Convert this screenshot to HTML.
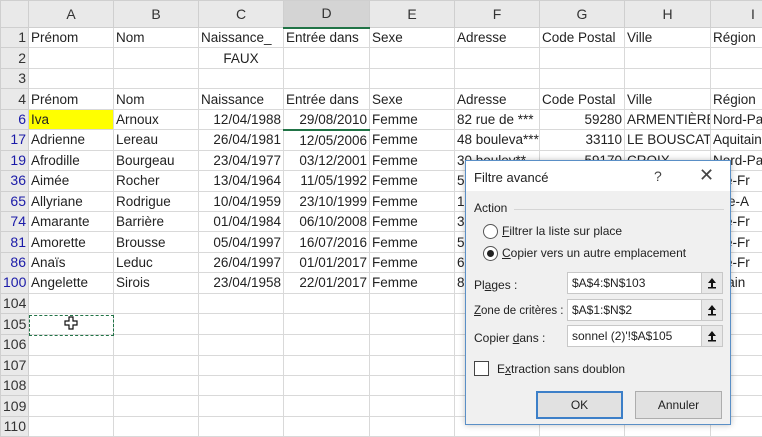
<!DOCTYPE html>
<html><head><meta charset="utf-8"><style>
body{margin:0;width:762px;height:433px;overflow:hidden;background:#fff;font-family:"Liberation Sans",sans-serif;position:relative}
table{border-collapse:collapse;table-layout:fixed;position:absolute;left:0;top:0;width:770px}
td{height:20.45px;border:1px solid #d9d9d9;padding:0 2px;font-size:13.5px;color:#222;white-space:nowrap;overflow:hidden;line-height:17px;box-sizing:border-box}
tr.h td{height:27px;background:#e9e9e9;text-align:center;color:#333;border-color:#cfcfcf;font-size:14px}
td.r{background:#e9e9e9;text-align:right;color:#333;border-color:#cfcfcf;padding:0 2px;font-size:14px}
td.b{color:#1a1aa8}
td.n{text-align:right}
.dlg{position:absolute;left:465px;top:160px;width:264px;height:263px;border:1px solid #5a8fc6;background:#f0f0f0;font-size:12px;color:#222;box-shadow:0 0 6px rgba(0,0,0,.25)}
.dlg div{position:absolute}
.inp{background:#fff;border:1px solid #c8c8c8;height:20px;line-height:20px;padding-left:4px;width:129px}
.ib{width:20px;height:20px;border:1px solid #c8c8c8;background:#e8e8e8}
.btn{width:85px;height:26px;border:1px solid #adadad;background:#e1e1e1;text-align:center;line-height:26px}
.rad{width:13px;height:13px;border:1px solid #555;border-radius:50%;background:#fff}
</style></head><body>
<table>
<colgroup><col style="width:28px"><col style="width:85px"><col style="width:85px"><col style="width:85px"><col style="width:86px"><col style="width:85px"><col style="width:85px"><col style="width:85px"><col style="width:86px"><col style="width:60px"></colgroup>
<tr class="h"><td style="background:#e9e9e9"></td><td>A</td><td>B</td><td>C</td><td style="background:#d4d4d4;border-bottom:2px solid #217346">D</td><td>E</td><td>F</td><td>G</td><td>H</td><td style="text-align:left;padding-left:40px">I</td></tr>
<tr><td class="r">1</td><td>Prénom</td><td>Nom</td><td>Naissance_</td><td>Entrée dans</td><td>Sexe</td><td>Adresse</td><td>Code Postal</td><td>Ville</td><td>Région</td></tr>
<tr><td class="r">2</td><td></td><td></td><td style="text-align:center">FAUX</td><td></td><td></td><td></td><td></td><td></td><td></td></tr>
<tr><td class="r">3</td><td></td><td></td><td></td><td></td><td></td><td></td><td></td><td></td><td></td></tr>
<tr><td class="r">4</td><td>Prénom</td><td>Nom</td><td>Naissance</td><td>Entrée dans</td><td>Sexe</td><td>Adresse</td><td>Code Postal</td><td>Ville</td><td>Région</td></tr>
<tr><td class="r b">6</td><td style="background:#ffff00">Iva</td><td>Arnoux</td><td class="n">12/04/1988</td><td class="n" style="border-bottom:2px solid #217346">29/08/2010</td><td>Femme</td><td>82 rue de ***</td><td class="n">59280</td><td>ARMENTIÈRES</td><td>Nord-Pa</td></tr>
<tr><td class="r b">17</td><td>Adrienne</td><td>Lereau</td><td class="n">26/04/1981</td><td class="n">12/05/2006</td><td>Femme</td><td>48 bouleva***</td><td class="n">33110</td><td>LE BOUSCAT</td><td>Aquitain</td></tr>
<tr><td class="r b">19</td><td>Afrodille</td><td>Bourgeau</td><td class="n">23/04/1977</td><td class="n">03/12/2001</td><td>Femme</td><td>30 boulev**</td><td class="n">59170</td><td>CROIX</td><td>Nord-Pa</td></tr>
<tr><td class="r b">36</td><td>Aimée</td><td>Rocher</td><td class="n">13/04/1964</td><td class="n">11/05/1992</td><td>Femme</td><td>5</td><td></td><td></td><td>-de-Fr</td></tr>
<tr><td class="r b">65</td><td>Allyriane</td><td>Rodrigue</td><td class="n">10/04/1959</td><td class="n">23/10/1999</td><td>Femme</td><td>1</td><td></td><td></td><td>ône-A</td></tr>
<tr><td class="r b">74</td><td>Amarante</td><td>Barrière</td><td class="n">01/04/1984</td><td class="n">06/10/2008</td><td>Femme</td><td>3</td><td></td><td></td><td>-de-Fr</td></tr>
<tr><td class="r b">81</td><td>Amorette</td><td>Brousse</td><td class="n">05/04/1997</td><td class="n">16/07/2016</td><td>Femme</td><td>5</td><td></td><td></td><td>-de-Fr</td></tr>
<tr><td class="r b">86</td><td>Anaïs</td><td>Leduc</td><td class="n">26/04/1997</td><td class="n">01/01/2017</td><td>Femme</td><td>6</td><td></td><td></td><td>-de-Fr</td></tr>
<tr><td class="r b">100</td><td>Angelette</td><td>Sirois</td><td class="n">23/04/1958</td><td class="n">22/01/2017</td><td>Femme</td><td>8</td><td></td><td></td><td>uitain</td></tr>
<tr><td class="r">104</td><td></td><td></td><td></td><td></td><td></td><td></td><td></td><td></td><td></td></tr>
<tr><td class="r">105</td><td style="text-align:center;padding-top:2px"><svg width="14" height="14" viewBox="0 0 14 14"><path d="M5 1h4v4h4v4h-4v4H5V9H1V5h4z" fill="#fff" stroke="#111" stroke-width="1.2"/></svg></td><td></td><td></td><td></td><td></td><td></td><td></td><td></td><td></td></tr>
<tr><td class="r">106</td><td></td><td></td><td></td><td></td><td></td><td></td><td></td><td></td><td></td></tr>
<tr><td class="r">107</td><td></td><td></td><td></td><td></td><td></td><td></td><td></td><td></td><td></td></tr>
<tr><td class="r">108</td><td></td><td></td><td></td><td></td><td></td><td></td><td></td><td></td><td></td></tr>
<tr><td class="r">109</td><td></td><td></td><td></td><td></td><td></td><td></td><td></td><td></td><td></td></tr>
<tr><td class="r">110</td><td></td><td></td><td></td><td></td><td></td><td></td><td></td><td></td><td></td></tr>
</table>
<div style="position:absolute;left:29px;top:315px;width:83px;height:19px;border:1px dashed #217346"></div>
<div class="dlg">
<div style="left:0;top:0;width:264px;height:30px;background:#fff"></div>
<div style="left:8px;top:9px;font-size:13px">Filtre avancé</div>
<div style="left:188px;top:7px;font-size:14px;color:#444">?</div>
<div style="left:233px;top:4px;font-size:18px;color:#444">✕</div>
<div style="left:8px;top:40px">Action</div>
<div style="left:48px;top:48px;width:210px;border-top:1px solid #d5d5d5"></div>
<div class="rad" style="left:17px;top:63px"></div>
<div style="left:36px;top:63px"><u>F</u>iltrer la liste sur place</div>
<div class="rad" style="left:17px;top:85px"><div style="left:3px;top:3px;width:7px;height:7px;border-radius:50%;background:#222"></div></div>
<div style="left:36px;top:85px"><u>C</u>opier vers un autre emplacement</div>
<div style="left:8px;top:117px">Pl<u>a</u>ges :</div>
<div class="inp" style="left:101px;top:111px">$A$4:$N$103</div><div class="ib" style="left:235px;top:111px"><svg width="20" height="20"><path d="M10 5l-4 5h3v4h2v-4h3z" fill="#111"/><rect x="6" y="14" width="8" height="1.5" fill="#111"/></svg></div>
<div style="left:8px;top:144px;font-size:11.5px"><u>Z</u>one de critères :</div>
<div class="inp" style="left:101px;top:138px">$A$1:$N$2</div><div class="ib" style="left:235px;top:138px"><svg width="20" height="20"><path d="M10 5l-4 5h3v4h2v-4h3z" fill="#111"/><rect x="6" y="14" width="8" height="1.5" fill="#111"/></svg></div>
<div style="left:8px;top:170px">Copier <u>d</u>ans :</div>
<div class="inp" style="left:101px;top:164px">sonnel (2)'!$A$105</div><div class="ib" style="left:235px;top:164px"><svg width="20" height="20"><path d="M10 5l-4 5h3v4h2v-4h3z" fill="#111"/><rect x="6" y="14" width="8" height="1.5" fill="#111"/></svg></div>
<div style="left:8px;top:200px;width:13px;height:13px;border:1px solid #444;background:#fff"></div>
<div style="left:31px;top:201px">E<u>x</u>traction sans doublon</div>
<div class="btn" style="left:70px;top:230px;border:2px solid #3c7fc8;width:83px;height:24px;line-height:24px">OK</div>
<div class="btn" style="left:169px;top:230px">Annuler</div>
</div>
</body></html>
